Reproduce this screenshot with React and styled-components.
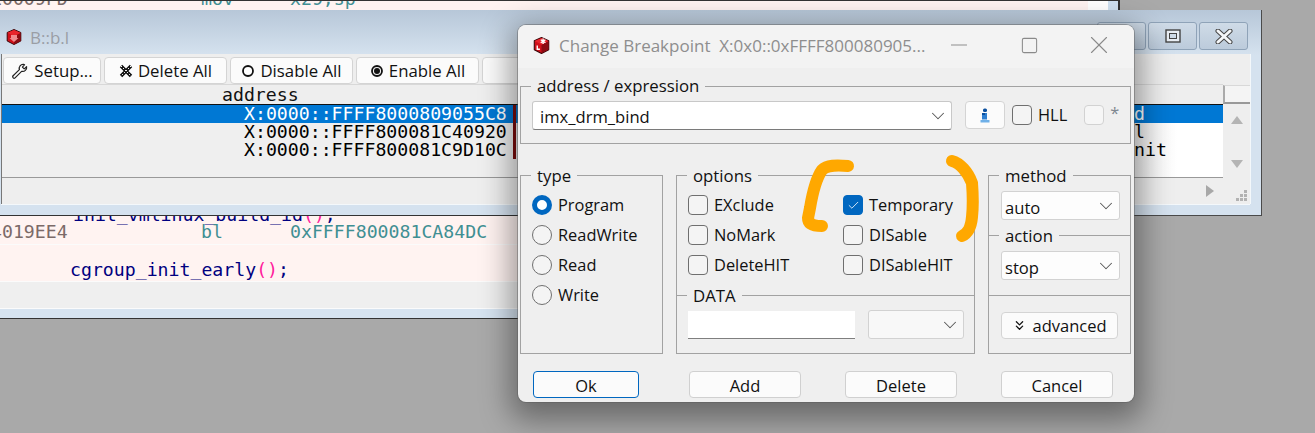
import React from 'react'
import styled, { createGlobalStyle } from 'styled-components'
import { ChevronDown, ChevronsDown, Check, Minus, Square, X } from 'lucide-react'

const ui = `'Open Sans', 'Noto Sans', sans-serif`
const mono = `'DejaVu Sans Mono', 'Liberation Mono', monospace`
const monoSize = '18.2px'

const Global = createGlobalStyle`
  html, body { margin: 0; padding: 0; background: #a9a9a9; }
  #root { width: 1315px; height: 433px; overflow: hidden; }
`

const Desktop = styled.div`
  position: relative;
  width: 1315px;
  height: 433px;
  background: #a9a9a9;
  overflow: hidden;
  font-family: ${ui};
`

/* ---- the old windows behind the dialog ---- */

const TopSliver = styled.div`
  position: absolute;
  top: 0;
  left: -2px;
  width: 1120px;
  height: 9px;
  background: linear-gradient(to right, #fff3f1 0, #fff3f1 1090px, #fff 1090px, #fff 1110px, #cfe0f0 1110px);
  border-top: 1px solid #333;
  border-bottom: 1px solid #c9c9c9;
  border-right: 2px solid #333;
  overflow: hidden;
`
const ListWindow = styled.div`
  position: absolute;
  top: 10px;
  left: -2px;
  width: 1263px;
  height: 205px;
  display: flex;
  flex-direction: column;
  background: linear-gradient(to bottom, #b7c7d8 0%, #d5e2ef 45px);
  border-right: 1px solid #4a4a4a;
  border-bottom: 1px solid #4a4a4a;
`
const OldTitle = styled.div`
  height: 44px;
  flex: none;
  display: flex;
  align-items: center;
  padding: 10px 0 0 8px;
  box-sizing: border-box;
  gap: 8px;
  font-size: 17px;
  color: #9a9ea5;
`
const CaptionButtons = styled.div`
  position: absolute;
  top: 12px;
  right: 13px;
  display: flex;
  gap: 0;
`
const CaptionButton = styled.div`
  width: 49px;
  height: 28px;
  margin-left: 2px;
  box-sizing: border-box;
  display: flex;
  align-items: center;
  justify-content: center;
  border: 1px solid #8fa3b8;
  border-radius: 3px;
  background: linear-gradient(to bottom, #cfdbe7, #bccbdb);
`
const ListClient = styled.div`
  flex: 1;
  margin: 0 11px 11px 3px;
  background: #eeeeee;
  display: flex;
  border-left: 1px solid #777;
  box-shadow: 1px 0 0 #f4f8fb, 0 1px 0 #f4f8fb;
`
const ListMain = styled.div`
  width: 1221px;
  flex: none;
  display: flex;
  flex-direction: column;
`
const OldToolbar = styled.div`
  height: 31px;
  flex: none;
  display: flex;
  gap: 3px;
  padding: 3px 0 0 1px;
  box-sizing: border-box;
`
const OldToolButton = styled.div`
  width: ${props => props.w}px;
  height: 27px;
  box-sizing: border-box;
  flex: none;
  background: #fbfbfb;
  border: 1px solid #d4d4d4;
  border-radius: 4px;
  display: flex;
  align-items: center;
  justify-content: center;
  gap: 5px;
  font-size: 16.8px;
  color: #111;
`
const ColumnHead = styled.div`
  height: 19px;
  flex: none;
  border-top: 1px solid #d8d8d8;
  border-bottom: 1px solid #111;
  box-sizing: content-box;
  margin-top: -1px;
  font: ${monoSize}/19px ${mono};
  color: #111;
  padding-left: 220px;
  white-space: pre;
`
const ListBody = styled.div`
  height: 72px;
  flex: none;
  box-sizing: content-box;
  background: linear-gradient(to right, #efefef 0, #efefef 1130px, #fff 1175px);
  border-bottom: 1px solid #999;
`
const ListRow = styled.div`
  height: 18px;
  display: grid;
  grid-template-columns: 1132px 1fr;
  background: ${props => props.selected ? '#0078d4' : 'transparent'};
  color: ${props => props.selected ? '#fff' : '#000'};
  font: ${monoSize}/18px ${mono};
  white-space: pre;
  overflow: hidden;
`
const AddressCell = styled.div`
  position: relative;
  padding-left: 242px;

  &::after {
    position: absolute;
    content: '';
    top: 0;
    bottom: 0;
    left: 511px;
    width: 3px;
    background: #7a0c0c;
  }
`
const HorizontalScroll = styled.div`
  flex: 1;
  display: flex;
  justify-content: flex-end;
  padding: 7px 9px 0 0;
  box-sizing: border-box;
`
const ArrowRight = styled.div`
  width: 0;
  height: 0;
  border-left: 8px solid #a8a8a8;
  border-top: 6px solid transparent;
  border-bottom: 6px solid transparent;
`
const ScrollColumn = styled.div`
  flex: 1;
  display: flex;
  flex-direction: column;
  align-items: center;
  padding-top: 31px;
  box-sizing: border-box;
`
const ColumnStub = styled.div`
  width: 100%;
  height: 19px;
  flex: none;
  box-sizing: border-box;
  background: #f4f4f4;
  border-top: 1px solid #d8d8d8;
  border-left: 2px solid #aaa;
  border-bottom: 2px solid #999;
`
const ArrowVertical = styled.div`
  width: 0;
  height: 0;
  margin-top: ${props => props.gap}px;
  border-left: 6px solid transparent;
  border-right: 6px solid transparent;
  border-bottom: ${props => props.down ? 'none' : '8px solid #b4b4b4'};
  border-top: ${props => props.down ? '8px solid #b4b4b4' : 'none'};
`
const GripDots = styled.svg`
  margin-top: auto;
  margin-bottom: 3px;
  align-self: flex-end;
  margin-right: 2px;
`
const CodeWindow = styled.div`
  position: absolute;
  top: 215px;
  left: -2px;
  width: 1120px;
  height: 102px;
  border-top: 1px solid #333;
  border-bottom: 1px solid #333;
  background: #efefef;
  box-sizing: content-box;
  overflow: hidden;
  display: flex;
  flex-direction: column;
`
const CodeBlock = styled.div`
  height: ${props => props.h}px;
  flex: none;
  overflow: hidden;
  background: #fff3f1;
  border-bottom: 1px solid #fbfbfb;
`
const SourceLine = styled.div`
  margin-top: ${props => props.mt}px;
  padding-left: ${props => props.indent}px;
  font: ${monoSize}/21px ${mono};
  color: #000080;
  white-space: pre;
`
const Paren = styled.span`
  color: #ff1a9c;
`
const AsmLine = styled.div`
  margin-top: ${props => props.mt}px;
  display: grid;
  grid-template-columns: 203px 89px 1fr;
  font: ${monoSize}/21px ${mono};
  color: #3f8f93;
  white-space: pre;
`
const AsmAddress = styled.span`
  margin-left: -7px;
  color: #7b6a68;
`
const CodeGrey = styled.div`
  height: 26px;
  flex: none;
`
const CodeFooter = styled.div`
  flex: 1;
  background: #d6e3f0;
  border-top: 1px solid #fbfbfb;
`

/* ---- the dialog ---- */

const Dialog = styled.div`
  position: absolute;
  top: 25px;
  left: 518px;
  width: 616px;
  height: 377px;
  box-sizing: border-box;
  background: #efefef;
  border-radius: 8px;
  box-shadow: 0 0 0 1px rgba(90, 90, 90, .45), 0 10px 30px 8px rgba(0, 0, 0, .38);
  display: flex;
  flex-direction: column;
  font-size: 16.5px;
  color: #111;
`
const TitleBar = styled.div`
  position: relative;
  flex: none;
  height: 43px;
  padding: 0 0 2px 15px;
  box-sizing: border-box;
  background: #f3f3f3;
  border-radius: 8px 8px 0 0;
  display: flex;
  align-items: center;
  gap: 9px;
`
const TitleText = styled.span`
  font-size: 17px;
  color: #8e8e8e;
  white-space: pre;
`
const WindowControls = styled.div`
  position: absolute;
  top: 0;
  right: 0;
  height: 40px;
  display: flex;
  align-items: center;
  color: #8a8a8a;
`
const WindowControl = styled.div`
  width: 70px;
  display: flex;
  justify-content: center;
`
const Panels = styled.div`
  flex: none;
  display: grid;
  grid-template-columns: 143px 299px 143px;
  grid-template-rows: 58px 179px;
  column-gap: 13px;
  row-gap: 31px;
  padding: 18px 3px 17px 2px;
`
const Group = styled.div`
  border: 1px solid #a2a2a2;
  box-sizing: border-box;
  grid-column: ${props => props.span || 'auto'};
`
const Section = styled.div`
  position: relative;
  height: ${props => props.h ? `${props.h}px` : 'auto'};
  box-sizing: border-box;
  border-top: ${props => props.ruled ? '1px solid #a2a2a2' : 'none'};
  padding: ${props => props.pt}px 0 0 ${props => props.pl}px;
`
const Legend = styled.span`
  position: absolute;
  top: ${props => props.top || -10}px;
  left: 10px;
  padding: 0 6px;
  background: #efefef;
  font-size: 16.8px;
  line-height: 20px;
  color: #111;
  white-space: pre;
`
const ExpressionRow = styled.div`
  display: flex;
  align-items: flex-start;
`
const TextBox = styled.div`
  width: 420px;
  height: 29px;
  flex: none;
  box-sizing: border-box;
  background: #fff;
  border: 1px solid #c8c8c8;
  border-bottom-color: #7a7a7a;
  border-radius: 3px;
  display: flex;
  align-items: center;
  justify-content: space-between;
  padding: 0 2px 0 7px;
  margin-right: 13px;
  font-size: 16.6px;
`
const BoxValue = styled.span`
  margin-top: ${props => props.mt || 0}px;
`
const InfoButton = styled.div`
  width: 40px;
  height: 28px;
  flex: none;
  margin-right: 7px;
  box-sizing: border-box;
  background: #fbfbfb;
  border: 1px solid #d4d4d4;
  border-radius: 4px;
  display: flex;
  align-items: center;
  justify-content: center;
`
const Choice = styled.label`
  display: flex;
  align-items: center;
  gap: 6px;
  margin: ${props => props.mt || 0}px ${props => props.mr || 0}px 0 0;
  font-size: 16.4px;
  line-height: 20px;
  color: ${props => props.dim ? '#8a8a8a' : '#111'};
  white-space: pre;
`
const Asterisk = styled.span`
  margin-top: -5px;
  color: #7f8790;
`
const Box = styled.span`
  width: 20px;
  height: 20px;
  flex: none;
  box-sizing: border-box;
  border-radius: 4px;
  border: 1px solid ${props => props.checked ? '#0067c0' : props.dim ? '#d2d2d2' : '#6f6f6f'};
  background: ${props => props.checked ? '#0067c0' : props.dim ? '#f6f6f6' : '#f4f4f4'};
  display: flex;
  align-items: center;
  justify-content: center;
  color: #fff;
`
const Radio = styled.span`
  width: 20px;
  height: 20px;
  flex: none;
  box-sizing: border-box;
  border-radius: 50%;
  border: ${props => props.checked ? '5.5px solid #0067c0' : '1px solid #6f6f6f'};
  background: ${props => props.checked ? '#fff' : '#f4f4f4'};
`
const RadioColumn = styled.div`
  display: flex;
  flex-direction: column;
  gap: 10px;
`
const OptionGrid = styled.div`
  display: grid;
  grid-template-columns: 155px auto;
  grid-auto-flow: column;
  grid-template-rows: repeat(3, 20px);
  gap: 10px 0;
`
const DataRow = styled.div`
  display: flex;
  align-items: flex-start;
  gap: 13px;
`
const Select = styled.div`
  width: ${props => props.w}px;
  height: 29px;
  flex: none;
  box-sizing: border-box;
  background: ${props => props.empty ? '#f8f8f8' : '#fdfdfd'};
  border: 1px solid #d2d2d2;
  border-radius: 3px;
  display: flex;
  align-items: center;
  justify-content: space-between;
  padding: 0 2px 0 3px;
  color: #111;
  font-size: 16.6px;
`
const DataField = styled.div`
  width: 167px;
  height: 28px;
  flex: none;
  margin-top: 1px;
  background: #fff;
  border-bottom: 1px solid #7f7f7f;
  box-sizing: border-box;
`
const SmallButton = styled.div`
  width: 117px;
  height: 27px;
  box-sizing: border-box;
  background: #fbfbfb;
  border: 1px solid #d4d4d4;
  border-radius: 4px;
  display: flex;
  align-items: center;
  justify-content: center;
  gap: 5px;
  font-size: 16.5px;
`
const Actions = styled.div`
  display: flex;
  justify-content: space-between;
  padding: 0 21px 0 15px;
  flex: none;
`
const ActionButton = styled.div`
  width: ${props => props.primary ? 106 : 112}px;
  margin-right: ${props => props.primary ? 6 : 0}px;
  height: 27px;
  box-sizing: border-box;
  padding-top: 2px;
  background: #fbfbfb;
  border: 1px solid ${props => props.primary ? '#0067c0' : '#d0d0d0'};
  border-radius: 4px;
  display: flex;
  align-items: center;
  justify-content: center;
  font-size: 16.5px;
  color: #111;
`

/* ---- the marker strokes somebody drew on the picture ---- */

const Marker = styled.svg`
  position: absolute;
  top: 150px;
  left: 800px;
  pointer-events: none;
`
const IconSvg = styled.svg`
  flex: none;
`

const AppIcon = ({ size = 16, star }) => (
  <IconSvg width={size} height={size} viewBox="0 0 16 16">
    <path d="M8 .5 14.8 3.5V12L8 15.5 1.2 12V3.5Z" fill="#d0101a" stroke="#3a0508" strokeWidth="1" strokeLinejoin="round" />
    <path d="M8 7.5 14.5 4V12L8 15.2Z" fill="#8c0b12" />
    <path d="M8 1 14.5 3.7 8 7 1.5 3.7Z" fill="#e8242c" />
    {star
      ? <path d="M9.5 1.5v5M7.3 2.6l4.4 2.8M11.7 2.6 7.3 5.4M4 8v3.5h2.5" stroke="#fff" strokeWidth="1.3" fill="none" />
      : <path d="M5 6h6v3h1.5L8 13 3.5 9H5z" fill="#f08a8e" />}
  </IconSvg>
)

const WrenchIcon = () => (
  <IconSvg width="18" height="18" viewBox="0 0 18 18">
    <path d="M1.6 14.2 8.4 7.6C7.6 5 9.6 2 12.6 2.4l1 .3-2.2 2.4 1.8 1.8 2.4-2.2c.6 3-2.2 5.4-5 4.6l-6.8 6.8c-1 .8-2.6-.6-1.8-1.9Z" fill="#fff" stroke="#222" strokeWidth="1.2" strokeLinejoin="round" />
  </IconSvg>
)

const CrossIcon = () => (
  <IconSvg width="14" height="14" viewBox="0 0 14 14">
    <path d="M2 2 12 12M12 2 2 12" stroke="#111" strokeWidth="3.4" />
    <path d="M2 2 12 12M12 2 2 12" stroke="#fff" strokeWidth="1" strokeDasharray="1.4 1.4" />
  </IconSvg>
)

const RingIcon = ({ filled }) => (
  <IconSvg width="14" height="14" viewBox="0 0 14 14">
    <circle cx="7" cy="7" r="5" fill={filled ? '#f2f2f2' : '#fff'} stroke="#111" strokeWidth="1.8" />
    {filled && <circle cx="7" cy="7" r="3" fill="#111" />}
  </IconSvg>
)

const InfoIcon = () => (
  <IconSvg width="12" height="15" viewBox="0 0 12 15">
    <rect x="4" y="0.5" width="4" height="3.5" rx="1.5" fill="#0b4f9e" />
    <path d="M3 5h5v6.5H3z" fill="#2f7fd0" />
    <path d="M1.5 12h9v2.5h-9z" fill="#6fb0e8" />
    <path d="M3 5h3v2H3z" fill="#0b4f9e" />
  </IconSvg>
)

const RestoreIcon = () => (
  <IconSvg width="16" height="14" viewBox="0 0 16 14">
    <rect x="1" y="1" width="14" height="12" fill="#e8edf3" stroke="#444" strokeWidth="1.4" />
    <rect x="4.5" y="4.5" width="7" height="5" fill="#cfdbe7" stroke="#444" />
  </IconSvg>
)

const CloseIcon = () => (
  <IconSvg width="18" height="15" viewBox="0 0 18 15">
    <path d="M3 2 15 13M15 2 3 13" stroke="#444" strokeWidth="5" strokeLinecap="round" />
    <path d="M3 2 15 13M15 2 3 13" stroke="#f4f6f8" strokeWidth="3" strokeLinecap="round" />
  </IconSvg>
)

const Chevron = () => <ChevronDown size={22} strokeWidth={1.1} color="#555" />

export default function App() {
  return (
    <Desktop>
      <Global />

      <TopSliver>
        <AsmLine mt={-13}>
          <AsmAddress>E0009FD</AsmAddress>
          <span>mov</span>
          <span>x29,sp</span>
        </AsmLine>
      </TopSliver>

      <ListWindow>
        <OldTitle>
          <AppIcon />
          <span>B::b.l</span>
        </OldTitle>
        <ListClient>
          <ListMain>
            <OldToolbar>
              <OldToolButton w={98}><WrenchIcon />Setup...</OldToolButton>
              <OldToolButton w={123}><CrossIcon />Delete All</OldToolButton>
              <OldToolButton w={123}><RingIcon />Disable All</OldToolButton>
              <OldToolButton w={123}><RingIcon filled />Enable All</OldToolButton>
              <OldToolButton w={60} />
            </OldToolbar>
            <ColumnHead>address</ColumnHead>
            <ListBody>
              <ListRow selected><AddressCell>X:0000::FFFF8000809055C8</AddressCell><span>d</span></ListRow>
              <ListRow><AddressCell>X:0000::FFFF800081C40920</AddressCell><span>l</span></ListRow>
              <ListRow><AddressCell>X:0000::FFFF800081C9D10C</AddressCell><span>nit</span></ListRow>
            </ListBody>
            <HorizontalScroll><ArrowRight /></HorizontalScroll>
          </ListMain>
          <ScrollColumn>
            <ColumnStub />
            <ArrowVertical gap={12} />
            <ArrowVertical gap={36} down />
            <GripDots width="12" height="11" viewBox="0 0 12 11" fill="#b2b2b2">
              <rect x="8" y="0" width="3" height="3" />
              <rect x="4" y="4" width="3" height="3" />
              <rect x="8" y="4" width="3" height="3" />
              <rect x="0" y="8" width="3" height="3" />
              <rect x="4" y="8" width="3" height="3" />
              <rect x="8" y="8" width="3" height="3" />
            </GripDots>
          </ScrollColumn>
        </ListClient>
        <CaptionButtons>
          <CaptionButton />
          <CaptionButton><RestoreIcon /></CaptionButton>
          <CaptionButton><CloseIcon /></CaptionButton>
        </CaptionButtons>
      </ListWindow>

      <CodeWindow>
        <CodeBlock h={28}>
          <SourceLine mt={-12} indent={75}>init_vmlinux_build_id<Paren>()</Paren>;</SourceLine>
          <AsmLine mt={-4}>
            <AsmAddress>4019EE4</AsmAddress>
            <span>bl</span>
            <span>0xFFFF800081CA84DC</span>
          </AsmLine>
        </CodeBlock>
        <CodeBlock h={36}>
          <SourceLine mt={14} indent={72}>cgroup_init_early<Paren>()</Paren>;</SourceLine>
        </CodeBlock>
        <CodeGrey />
        <CodeFooter />
      </CodeWindow>

      <Dialog>
        <TitleBar>
          <AppIcon star size={17} />
          <TitleText>Change Breakpoint  X:0x0::0xFFFF800080905...</TitleText>
          <WindowControls>
            <WindowControl><Minus size={26} strokeWidth={0.9} /></WindowControl>
            <WindowControl><Square size={19} strokeWidth={1.3} /></WindowControl>
            <WindowControl><X size={30} strokeWidth={0.9} /></WindowControl>
          </WindowControls>
        </TitleBar>
        <Panels>
          <Group span="1 / -1">
            <Section pt={14} pl={11}>
              <Legend top={-11}>address / expression</Legend>
              <ExpressionRow>
                <TextBox><BoxValue mt={1}>imx_drm_bind</BoxValue><Chevron /></TextBox>
                <InfoButton><InfoIcon /></InfoButton>
                <Choice mt={4} mr={17}><Box />HLL</Choice>
                <Choice mt={4} dim><Box dim /><Asterisk>*</Asterisk></Choice>
              </ExpressionRow>
            </Section>
          </Group>
          <Group>
            <Section pt={19} pl={11}>
              <Legend>type</Legend>
              <RadioColumn>
                <Choice><Radio checked />Program</Choice>
                <Choice><Radio />ReadWrite</Choice>
                <Choice><Radio />Read</Choice>
                <Choice><Radio />Write</Choice>
              </RadioColumn>
            </Section>
          </Group>
          <Group>
            <Section h={119} pt={19} pl={11}>
              <Legend>options</Legend>
              <OptionGrid>
                <Choice><Box />EXclude</Choice>
                <Choice><Box />NoMark</Choice>
                <Choice><Box />DeleteHIT</Choice>
                <Choice><Box checked><Check size={13} strokeWidth={1.5} /></Box>Temporary</Choice>
                <Choice><Box />DISable</Choice>
                <Choice><Box />DISableHIT</Choice>
              </OptionGrid>
            </Section>
            <Section ruled pt={14} pl={11}>
              <Legend>DATA</Legend>
              <DataRow>
                <DataField />
                <Select w={96} empty><span /><Chevron /></Select>
              </DataRow>
            </Section>
          </Group>
          <Group>
            <Section h={59} pt={15} pl={12}>
              <Legend>method</Legend>
              <Select w={119}><BoxValue mt={4}>auto</BoxValue><Chevron /></Select>
            </Section>
            <Section ruled h={60} pt={15} pl={12}>
              <Legend>action</Legend>
              <Select w={119}><BoxValue mt={4}>stop</BoxValue><Chevron /></Select>
            </Section>
            <Section ruled pt={16} pl={12}>
              <SmallButton><ChevronsDown size={15} strokeWidth={2} />advanced</SmallButton>
            </Section>
          </Group>
        </Panels>
        <Actions>
          <ActionButton primary>Ok</ActionButton>
          <ActionButton>Add</ActionButton>
          <ActionButton>Delete</ActionButton>
          <ActionButton>Cancel</ActionButton>
        </Actions>
      </Dialog>

      <Marker width="190" height="100" viewBox="0 0 190 100" fill="none" stroke="#ffa800" strokeWidth="12" strokeLinecap="round" strokeLinejoin="round">
        <path d="M48 16C36 15 27 15 22 20 15 30 12 46 10 58L8 68C8 74 14 76 22 76" />
        <path d="M152 11C160 13 168 22 172 33 173 46 173 58 172 67 171 78 168 83 162 86" />
      </Marker>
    </Desktop>
  )
}
